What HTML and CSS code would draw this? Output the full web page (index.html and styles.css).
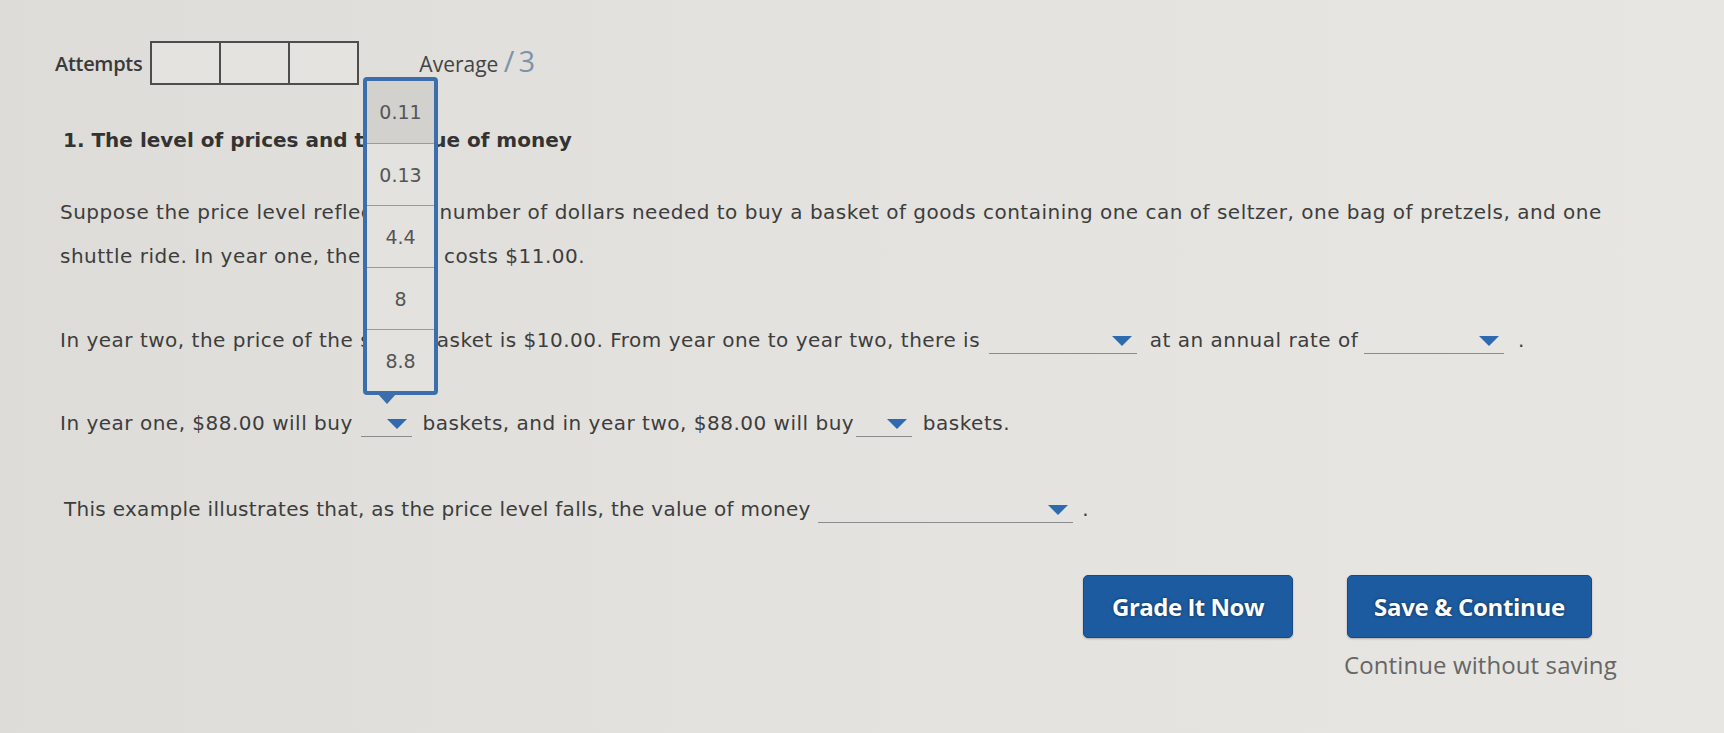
FILE: index.html
```html
<!DOCTYPE html>
<html lang="en">
<head>
<meta charset="utf-8">
<title>The level of prices and the value of money</title>
<link rel="stylesheet" href="styles.css">
</head>
<body>
<div class="page">
  <div class="attempts-row">
    <span class="attempts-label">Attempts</span>
    <div class="boxes">
      <span class="box"></span><span class="box"></span><span class="box"></span>
    </div>
    <span class="average">Average <span class="out-of">/3</span></span>
  </div>

  <div class="question">
    <h2 class="q-title">1. The level of prices and the value of money</h2>

    <p class="q-text p1">Suppose the price level reflects the number of dollars needed to buy a basket of goods containing one can of seltzer, one bag of pretzels, and one shuttle ride. In year one, the basket costs $11.00.</p>

    <p class="q-text p2">In year two, the price of the same basket is $10.00. From year one to year two, there is <span class="select s-change"><span class="arrow"></span></span> at an annual rate of <span class="select s-rate"><span class="arrow"></span></span><span class="dot">.</span></p>

    <p class="q-text p3">In year one, $88.00 will buy <span class="select s-small"><span class="arrow"></span></span> baskets, and in year two, $88.00 will buy <span class="select s-small2"><span class="arrow"></span></span> baskets.</p>

    <p class="q-text p4">This example illustrates that, as the price level falls, the value of money <span class="select s-value"><span class="arrow"></span></span><span class="dot dot4">.</span></p>
  </div>

  <div class="actions">
    <div class="action-col">
      <button class="btn btn-grade">Grade It Now</button>
    </div>
    <div class="action-col">
      <button class="btn btn-save">Save &amp; Continue</button>
      <a class="continue-link" href="#">Continue without saving</a>
    </div>
  </div>

  <ul class="dropdown-list">
    <li class="opt active">0.11</li>
    <li class="opt">0.13</li>
    <li class="opt">4.4</li>
    <li class="opt">8</li>
    <li class="opt">8.8</li>
  </ul>
</div>
</body>
</html>
```

FILE: styles.css
```css
html, body {
  margin: 0;
  padding: 0;
}
body {
  width: 1724px;
  height: 733px;
  overflow: hidden;
  background: linear-gradient(90deg, #dddcd8 0%, #e3e2de 45%, #e7e6e3 100%);
  font-family: "DejaVu Sans", Verdana, sans-serif;
  color: #3b3b3b;
}
.page {
  position: relative;
  padding: 41px 0 0 55px;
  height: 692px;
}

/* attempts header */
.attempts-row {
  display: flex;
  align-items: center;
  height: 44px;
}
.attempts-label {
  font-family: "Open Sans", sans-serif;
  font-weight: 600;
  font-size: 20px;
  letter-spacing: -0.3px;
  color: #3a3a3a;
  margin-right: 8px;
}
.boxes {
  display: flex;
}
.box {
  width: 71px;
  height: 44px;
  box-sizing: border-box;
  border: 2px solid #4d4d4d;
  background: #e4e3e0;
}
.box + .box {
  margin-left: -2px;
}
.average {
  margin-left: 60px;
  margin-top: -6px;
  font-family: "Open Sans", sans-serif;
  font-size: 21px;
  color: #444;
}
.out-of {
  font-size: 29px;
  letter-spacing: 4px;
  color: #7d93aa;
}

/* question */
.question {
  margin-top: 33px;
}
.q-title {
  margin: 0 0 0 8px;
  font-size: 20px;
  font-weight: bold;
  line-height: 44px;
  color: #333;
}
.q-text {
  margin: 0 0 0 5px;
  font-size: 20px;
  line-height: 44px;
  letter-spacing: 0.5px;
  color: #3d3d3d;
}
.p1 {
  margin-top: 28px;
  width: 1560px;
}
.p2 { margin-top: 40px; }
.p3 { margin-top: 39px; }
.p4 {
  margin-top: 42px;
  margin-left: 9px;
  letter-spacing: 0.3px;
}

.select {
  display: inline-flex;
  justify-content: flex-end;
  align-items: center;
  box-sizing: border-box;
  height: 24px;
  vertical-align: middle;
  border-bottom: 1px solid #8c8c8c;
}
.arrow {
  width: 0;
  height: 0;
  border-left: 10px solid transparent;
  border-right: 10px solid transparent;
  border-top: 10px solid #2e6ab0;
  margin-right: 5px;
}
.s-change { width: 148px; margin-left: 2px; margin-right: 6px; }
.s-rate { width: 140px; margin-left: -1px; }
.s-small { width: 51px; margin-left: 1px; margin-right: 4px; }
.s-small2 { width: 56px; margin-left: -5px; margin-right: 4px; }
.s-value { width: 255px; margin-left: 1px; }
.dot { margin-left: 14px; }
.dot4 { margin-left: 9px; }

/* action buttons */
.actions {
  display: flex;
  align-items: flex-start;
  gap: 54px;
  margin-top: 44px;
  padding-left: 1028px;
}
.action-col {
  display: flex;
  flex-direction: column;
  align-items: flex-start;
}
.btn {
  height: 63px;
  border: 1px solid #164a85;
  border-radius: 5px;
  background: #1c5b9f;
  color: #fff;
  font-family: "Open Sans", sans-serif;
  font-weight: 700;
  font-size: 24px;
  letter-spacing: -0.5px;
  text-shadow: 0 0 3px rgba(0, 0, 0, 0.55);
  box-shadow: 0 1px 2px rgba(0, 0, 0, 0.25);
  padding: 0;
  cursor: pointer;
}
.btn-grade { width: 210px; }
.btn-save { width: 245px; letter-spacing: -0.3px; }
.continue-link {
  margin-top: 10px;
  margin-left: -3px;
  font-family: "Open Sans", sans-serif;
  font-size: 24px;
  letter-spacing: 0.1px;
  color: #666;
  text-decoration: none;
}

/* open dropdown list */
.dropdown-list {
  position: absolute;
  left: 363px;
  top: 77px;
  width: 75px;
  margin: 0;
  padding: 0;
  list-style: none;
  box-sizing: border-box;
  border: 4px solid #3a6ead;
  border-radius: 4px;
  background: #e3e2df;
}
.dropdown-list::after {
  content: "";
  position: absolute;
  left: 10px;
  bottom: -13px;
  border-left: 10px solid transparent;
  border-right: 10px solid transparent;
  border-top: 11px solid #3a6ead;
}
.opt {
  height: 62px;
  box-sizing: border-box;
  display: flex;
  align-items: center;
  justify-content: center;
  font-size: 19px;
  color: #555;
  border-top: 1px solid #9a9a9a;
}
.opt:first-child {
  border-top: none;
}
.opt.active {
  background: #d2d1ce;
}
```
